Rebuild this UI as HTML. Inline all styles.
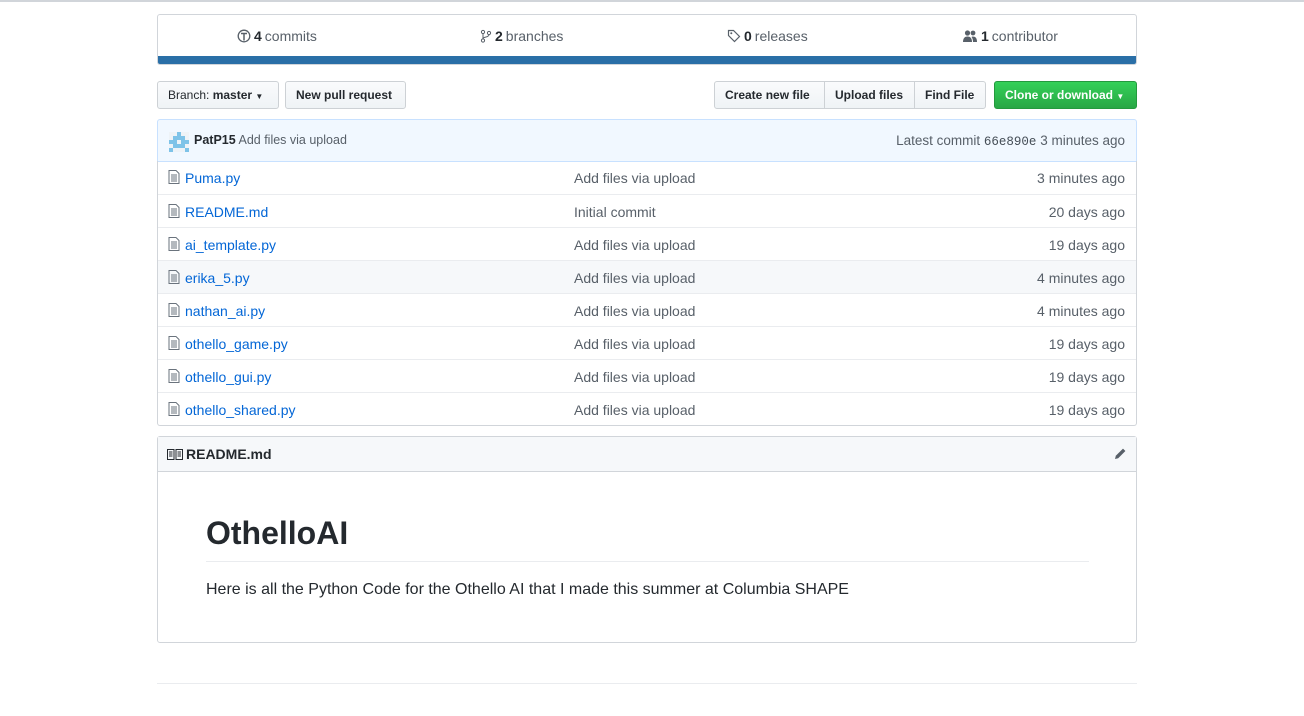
<!DOCTYPE html>
<html><head><meta charset="utf-8"><style>
*{box-sizing:border-box;margin:0;padding:0}
body{width:1304px;height:716px;background:#fff;font-family:"Liberation Sans",sans-serif;color:#24292e;font-size:14px;position:relative;overflow:hidden}
.abs{position:absolute}
.topline{top:0;left:0;width:1304px;height:2px;background:#d1d5da}
.sum{left:157px;top:14px;width:980px;height:51px;border:1px solid #d1d5da;border-radius:3px;overflow:hidden}
.sum .bar{position:absolute;left:0;bottom:0;width:100%;height:8px;background:#2a6fa7}
.sum .it{position:absolute;top:13px;color:#586069;font-size:14px;display:flex;align-items:center;gap:3px}
.sum b{color:#24292e}
.btn{position:absolute;top:81px;height:28px;border:1px solid #cdd1d5;background:linear-gradient(#fafbfc,#eff3f6);font-size:12px;font-weight:bold;line-height:26px;padding:0 10px;color:#24292e;border-radius:3px}
.green{background:linear-gradient(#34d058,#28a745);border-color:#24993e;color:#fff}
.commit{left:157px;top:119px;width:980px;height:43px;background:#f1f8ff;border:1px solid #c8e1ff;border-radius:3px 3px 0 0;font-size:12.5px;color:#586069}
.files{left:157px;top:161px;width:980px;height:265px;border:1px solid #d1d5da;border-top:none;border-radius:0 0 3px 3px}
.row{height:33px;border-top:1px solid #eaecef;position:relative;font-size:14px}
.row:first-child{border-top:none}
.row .n{position:absolute;left:27px;top:9px;color:#0366d6}
.row .m{position:absolute;left:416px;top:9px;color:#586069}
.row .a{position:absolute;right:11px;top:9px;color:#586069}
.row svg{position:absolute;left:10px;top:9px}
.readme{left:157px;top:436px;width:980px;height:207px;border:1px solid #d1d5da;border-radius:3px}
.rh{height:35px;background:#f6f8fa;border-bottom:1px solid #d1d5da;position:relative}
</style></head><body>
<div class="abs topline"></div>
<div class="abs sum"><div class="bar"></div>
<div class="it" style="left:79px"><svg width="14" height="14" viewBox="0 0 14 14"><circle cx="7" cy="7" r="5.8" fill="none" stroke="#586069" stroke-width="1.3"/><path d="M4 4.5h6M7 4.5v7" stroke="#586069" stroke-width="1.5"/></svg><b>4</b> commits</div>
<div class="it" style="left:322px"><svg width="12" height="14" viewBox="0 0 12 14"><circle cx="3" cy="3" r="1.6" fill="none" stroke="#586069"/><circle cx="3" cy="11.5" r="1.6" fill="none" stroke="#586069"/><circle cx="9" cy="4" r="1.6" fill="none" stroke="#586069"/><path d="M3 4.6v5.3M9 5.6c0 3-6 2-6 4" fill="none" stroke="#586069"/></svg><b>2</b> branches</div>
<div class="it" style="left:569px"><svg width="14" height="14" viewBox="0 0 14 14"><path d="M1.5 1.5h5l6 6-5 5-6-6z" fill="none" stroke="#586069" stroke-width="1.2"/><circle cx="4.3" cy="4.3" r="1" fill="#586069"/></svg><b>0</b> releases</div>
<div class="it" style="left:804px"><svg width="16" height="14" viewBox="0 0 16 14"><circle cx="5.5" cy="4" r="2.6" fill="#586069"/><path d="M1 13c0-4 2-5.5 4.5-5.5S10 9 10 13z" fill="#586069"/><circle cx="11" cy="4" r="2.4" fill="#586069"/><path d="M10.5 7.5c3 0 4.5 1.5 4.5 5.5h-4c0-2-.5-4-1.5-5z" fill="#586069"/></svg><b>1</b> contributor</div>
</div>
<div class="btn" style="left:157px;width:122px;font-weight:normal">Branch: <b>master</b> <span style="font-size:8px">▼</span></div>
<div class="btn" style="left:285px;width:121px">New pull request</div>
<div class="btn" style="left:714px;width:111px;border-radius:3px 0 0 3px">Create new file</div>
<div class="btn" style="left:824px;width:91px;border-radius:0">Upload files</div>
<div class="btn" style="left:914px;width:72px;border-radius:0 3px 3px 0">Find File</div>
<div class="btn green" style="left:994px;width:143px">Clone or download <span style="font-size:8px">▼</span></div>
<div class="abs commit">
<svg class="abs" style="left:11px;top:12px" width="20" height="20" viewBox="0 0 5 5"><rect width="5" height="5" fill="#eef3f7"/><g fill="#7ec3e8"><rect x="2" y="0" width="1" height="1"/><rect x="1" y="1" width="3" height="1"/><rect x="0" y="2" width="2" height="1"/><rect x="3" y="2" width="2" height="1"/><rect x="1" y="3" width="3" height="1"/><rect x="0" y="4" width="1" height="1"/><rect x="4" y="4" width="1" height="1"/></g></svg>
<div class="abs" style="left:36px;top:13px"><b style="color:#24292e">PatP15</b> Add files via upload</div>
<div class="abs" style="right:11px;top:13px;font-size:13.5px">Latest commit <span style="font-family:'Liberation Mono',monospace;color:#444d56;font-size:12.5px">66e890e</span> 3 minutes ago</div>
</div>
<div class="abs files">
<div class="row"><svg width="12" height="14" viewBox="0 0 12 14"><path d="M1 .5h7l3 3v10H1z" fill="none" stroke="#6a737d"/><path d="M3 5h6M3 7h6M3 9h6M3 11h6" stroke="#6a737d"/></svg><span class="n">Puma.py</span><span class="m">Add files via upload</span><span class="a">3 minutes ago</span></div>
<div class="row"><svg width="12" height="14" viewBox="0 0 12 14"><path d="M1 .5h7l3 3v10H1z" fill="none" stroke="#6a737d"/><path d="M3 5h6M3 7h6M3 9h6M3 11h6" stroke="#6a737d"/></svg><span class="n">README.md</span><span class="m">Initial commit</span><span class="a">20 days ago</span></div>
<div class="row"><svg width="12" height="14" viewBox="0 0 12 14"><path d="M1 .5h7l3 3v10H1z" fill="none" stroke="#6a737d"/><path d="M3 5h6M3 7h6M3 9h6M3 11h6" stroke="#6a737d"/></svg><span class="n">ai_template.py</span><span class="m">Add files via upload</span><span class="a">19 days ago</span></div>
<div class="row" style="background:#f6f8fa"><svg width="12" height="14" viewBox="0 0 12 14"><path d="M1 .5h7l3 3v10H1z" fill="none" stroke="#6a737d"/><path d="M3 5h6M3 7h6M3 9h6M3 11h6" stroke="#6a737d"/></svg><span class="n">erika_5.py</span><span class="m">Add files via upload</span><span class="a">4 minutes ago</span></div>
<div class="row"><svg width="12" height="14" viewBox="0 0 12 14"><path d="M1 .5h7l3 3v10H1z" fill="none" stroke="#6a737d"/><path d="M3 5h6M3 7h6M3 9h6M3 11h6" stroke="#6a737d"/></svg><span class="n">nathan_ai.py</span><span class="m">Add files via upload</span><span class="a">4 minutes ago</span></div>
<div class="row"><svg width="12" height="14" viewBox="0 0 12 14"><path d="M1 .5h7l3 3v10H1z" fill="none" stroke="#6a737d"/><path d="M3 5h6M3 7h6M3 9h6M3 11h6" stroke="#6a737d"/></svg><span class="n">othello_game.py</span><span class="m">Add files via upload</span><span class="a">19 days ago</span></div>
<div class="row"><svg width="12" height="14" viewBox="0 0 12 14"><path d="M1 .5h7l3 3v10H1z" fill="none" stroke="#6a737d"/><path d="M3 5h6M3 7h6M3 9h6M3 11h6" stroke="#6a737d"/></svg><span class="n">othello_gui.py</span><span class="m">Add files via upload</span><span class="a">19 days ago</span></div>
<div class="row"><svg width="12" height="14" viewBox="0 0 12 14"><path d="M1 .5h7l3 3v10H1z" fill="none" stroke="#6a737d"/><path d="M3 5h6M3 7h6M3 9h6M3 11h6" stroke="#6a737d"/></svg><span class="n">othello_shared.py</span><span class="m">Add files via upload</span><span class="a">19 days ago</span></div>
</div>
<div class="abs readme">
<div class="rh"><svg class="abs" style="left:9px;top:11px" width="16" height="13" viewBox="0 0 16 13"><path d="M.5 1.5h6.5v10H.5zM9 1.5h6.5v10H9z" fill="none" stroke="#24292e"/><path d="M2 4h3.5M2 6h3.5M2 8h3.5M10.5 4H14M10.5 6H14M10.5 8H14" stroke="#24292e"/></svg><b class="abs" style="left:28px;top:9px">README.md</b>
<svg class="abs" style="right:9px;top:10px" width="14" height="14" viewBox="0 0 14 14"><path d="M2 12l.8-3.2L10 1.6l2.4 2.4-7.2 7.2z" fill="#586069"/></svg></div>
<div class="abs" style="left:48px;top:78px;font-size:32px;font-weight:bold;color:#24292e">OthelloAI</div>
<div class="abs" style="left:48px;top:124px;width:883px;height:1px;background:#eaecef"></div>
<div class="abs" style="left:48px;top:144px;font-size:16px">Here is all the Python Code for the Othello AI that I made this summer at Columbia SHAPE</div>
</div>
<div class="abs" style="left:157px;top:683px;width:980px;height:1px;background:#eaecef"></div>
</body></html>
